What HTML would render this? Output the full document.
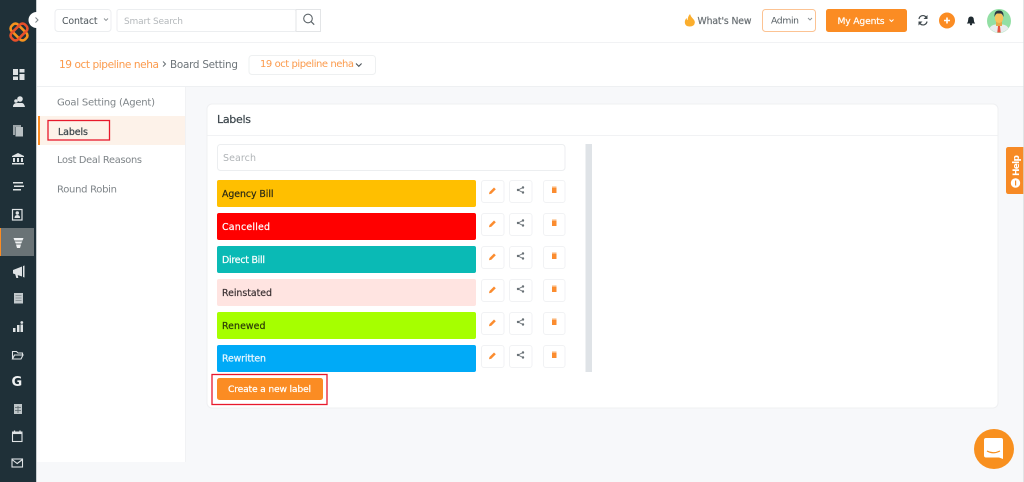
<!DOCTYPE html>
<html><head><meta charset="utf-8"><title>Labels</title>
<style>
html,body{margin:0;padding:0;width:1024px;height:482px;overflow:hidden;background:#fff}
svg{display:block;filter:blur(.3px)}
text{font-family:"DejaVu Sans","Liberation Sans",sans-serif}
.m{stroke-width:.2px;paint-order:stroke}
</style></head><body>
<svg width="1024" height="482" viewBox="0 0 1024 482" xmlns="http://www.w3.org/2000/svg">
<rect width="1024" height="482" fill="#f7f8fa"/>
<!-- top bars -->
<rect x="36" width="988" height="42" fill="#fff"/>
<rect x="36" y="42" width="988" height="1" fill="#f1f2f4"/>
<rect x="36" y="43" width="988" height="43" fill="#fff"/>
<rect x="36" y="86" width="988" height="1" fill="#eef0f2"/>
<!-- left nav -->
<rect x="37" y="87" width="148" height="375" fill="#fff"/>
<rect x="185" y="87" width="1" height="375" fill="#f1f2f4"/>
<rect x="38" y="116" width="147" height="29" fill="#fdf2e9"/>
<rect x="38" y="116" width="2" height="29" fill="#fb8c23"/>
<rect x="48" y="120.500" width="61.500" height="19.500" fill="none" stroke="#e8192c" stroke-width="1.300"/>
<text x="57" y="105.500" textLength="98" fill="#7e8488" font-size="10">Goal Setting (Agent)</text>
<text x="58" y="135" textLength="30" fill="#3a4349" font-size="9.500" class="m" stroke="#3a4349">Labels</text>
<text x="57" y="163" textLength="85" fill="#7e8488" font-size="9.800">Lost Deal Reasons</text>
<text x="57" y="192.500" textLength="60" fill="#7e8488" font-size="10">Round Robin</text>
<!-- sidebar -->
<rect width="36" height="482" fill="#1f3038"/>
<rect x="36" width="1" height="482" fill="#c9ced1"/>
<rect y="228" width="34" height="28" fill="#6a7376"/>
<rect y="228" width="1" height="28" fill="#fb8c23"/>
<!-- logo -->
<g fill="none" stroke-width="2.600">
<rect x="9.500" y="27.500" width="19" height="9" rx="3.500" stroke="#f7931e" transform="rotate(45 19 32)"/>
<rect x="9.500" y="27.500" width="19" height="9" rx="3.500" stroke="#e8502a" transform="rotate(-45 19 32)"/>
</g>
<!-- collapse -->
<circle cx="36.500" cy="20" r="8" fill="#fff"/>
<path d="M35.500 17.500 L38 20 L35.500 22.500" fill="none" stroke="#7a8286" stroke-width="1"/>
<!-- sidebar icons -->
<g fill="#dfe3e5">
<path d="M13 69h5v6h-5zM19.500 69h5v3.500h-5zM19.500 74h5v6h-5zM13 76.500h5v3.500h-5z"/>
<circle cx="20" cy="99" r="2.800"/><circle cx="16" cy="101" r="1.800"/>
<path d="M13 107q0-4 4-4h5q2 0 3 4z"/>
<path d="M13 125h8v2h-6v8h-2z" fill="#9aa3a7"/><rect x="15.500" y="127" width="7.500" height="9.500" fill="#b8c0c3"/>
<path d="M18 153l6 3v1h-12v-1zM13 158h2v4h-2zM17 158h2v4h-2zM21 158h2v4h-2zM12 163h12v1.500h-12z"/>
<path d="M13 182h10v1.500h-10zM14 185.500h10v1.500h-10zM13 189h8v1.500h-8z"/>
<rect x="12.500" y="209.500" width="9.500" height="10.500" fill="none" stroke="#dfe3e5" stroke-width="1.200"/>
<circle cx="17.300" cy="213" r="1.700"/><path d="M14.500 218q0-3 2.800-3t2.800 3z"/>
<path d="M13.500 238h10l-1 2.500h-8zM14.800 241.500h7.400l-1 2h-5.400zM16 244.500h5l-1 3.500h-3z" fill="#f1f3f4"/>
<path d="M13 270l9-3.500v10l-9-3zM23 266l1.500-.5v12l-1.500-.5zM15 273.500l2.500.8.800 3.700h-2z"/>
<rect x="14" y="293" width="9" height="10.500" fill="#c2c9cc"/><path d="M15.500 295.500h6M15.500 298h6M15.500 300.500h6" stroke="#7d878b" stroke-width=".7"/>
<path d="M13 328h2.500v4h-2.500zM17 325h2.500v7h-2.500zM20.500 324.500h2.500v7.500h-2.500z"/><circle cx="21.800" cy="322.500" r="1.400"/>
<text x="11.500" y="386" font-size="13" font-weight="700" fill="#f0f2f3">G</text>
<rect x="14" y="404" width="8" height="10" fill="#bdc5c8"/><path d="M15 407.500h6M15 410.500h6M18 406v7" stroke="#5b676c" stroke-width=".8"/>
</g>
<g fill="none" stroke="#dfe3e5" stroke-width="1.100">
<path d="M12.500 359v-7.500h4l1.500 1.500h4.500v2M12.500 359l2-4h8.500l-2 4z"/>
<rect x="12.500" y="433.500" width="9.500" height="8"/>
<path d="M12 432.500h10.500" stroke-width="2"/><path d="M14.500 430.500v2M20 430.500v2" stroke-width="1.300"/>
<rect x="12" y="459" width="10.500" height="8"/><path d="M12 459.500l5.200 4 5.300-4"/>
</g>
<!-- top left controls -->
<rect x="55" y="9.500" width="56" height="22" rx="3" fill="#fff" stroke="#eceef0"/>
<text x="62" y="24" textLength="35.500" font-size="9.400" fill="#4e565b">Contact</text>
<path d="M104 18.500l2 2 2-2" fill="none" stroke="#8a9094" stroke-width=".9"/>
<rect x="117" y="9.500" width="179" height="22" rx="2" fill="#fff" stroke="#eceef0"/>
<text x="124" y="24" textLength="59" font-size="9" fill="#b4b8bb">Smart Search</text>
<rect x="296" y="9.500" width="24.500" height="22" fill="#fff" stroke="#e3e5e7"/>
<circle cx="308" cy="18.500" r="4.300" fill="none" stroke="#5d656a" stroke-width="1.100"/>
<path d="M311.200 21.700l3 3" stroke="#5d656a" stroke-width="1.200"/>
<!-- breadcrumbs -->
<text x="59" y="68" textLength="100" font-size="10.600" fill="#fb9a4c">19 oct pipeline neha</text>
<path d="M163 61.500l2.500 2.500-2.500 2.500" fill="none" stroke="#666e73" stroke-width="1"/>
<text x="170" y="68" textLength="68" font-size="10.400" fill="#6d7479">Board Setting</text>
<rect x="249" y="55.500" width="126.500" height="19" rx="3" fill="#fff" stroke="#eef0f1"/>
<text x="260" y="67" textLength="94" font-size="10" fill="#fb9a4c">19 oct pipeline neha</text>
<path d="M356 63.500l2.800 2.800 2.800-2.800" fill="none" stroke="#4e565b" stroke-width="1.100"/>
<!-- right header -->
<path d="M690 14q.8 2.700 3 4.800 2 2 1.800 4-.5 3.700-5 3.700-5 0-5-4.200 0-2.500 1.800-4.300 0 1.500 1 2.200.2-3.700 2.400-6.200z" fill="#fbae2d"/>
<text x="697.500" y="24" textLength="54" font-size="9.300" fill="#6a7074" class="m" stroke="#6a7074">What's New</text>
<rect x="762.500" y="9.500" width="53" height="22" rx="3" fill="#fff" stroke="#fcc393"/>
<text x="771" y="23.500" textLength="28" font-size="9.200" fill="#555d62">Admin</text>
<path d="M808 18l2 2 2-2" fill="none" stroke="#8a9094" stroke-width=".9"/>
<rect x="826" y="9" width="81" height="23" rx="2.500" fill="#fb8c23"/>
<text x="837.500" y="24" textLength="47" font-size="9.200" fill="#fff" class="m" stroke="#fff">My Agents</text>
<path d="M889.500 19.500l2 2 2-2" fill="none" stroke="#fff" stroke-width="1"/>
<g fill="none" stroke="#3f484d" stroke-width="1.200">
<path d="M919 19a4 4 0 0 1 6.500-2.500l1.500 1.500M927 21.500a4 4 0 0 1-6.500 2.500l-1.500-1.500"/>
</g>
<path d="M927.500 15v4h-4zM918.500 25.500v-4h4z" fill="#3f484d"/>
<circle cx="947" cy="20.500" r="8" fill="#fb8c23"/>
<path d="M947 17.500v6M944 20.500h6" stroke="#fff" stroke-width="1.600"/>
<path d="M971 16.500q2.800 0 2.800 3.300 0 2.300 1.400 3.700h-8.400q1.400-1.400 1.400-3.700 0-3.300 2.800-3.300z" fill="#1f2a30"/><circle cx="971" cy="24.300" r="1.100" fill="#1f2a30"/>
<!-- avatar -->
<circle cx="999" cy="21" r="12" fill="#92dfa4"/>
<path d="M989.500 28q2-3 6-3.500h7q4 .5 6 3.500a12 12 0 0 1-19 0z" fill="#e9ecef"/>
<rect x="996" y="21" width="6" height="5" fill="#e5a94b"/>
<ellipse cx="999" cy="18" rx="4.200" ry="5" fill="#f8c25c"/>
<path d="M994.500 17q-.5-6.500 4.500-6.500t4.500 6.500q-1-3-2.500-3.500h-4q-1.500.5-2.500 3.500z" fill="#2b3540"/>
<path d="M998 26h2l.7 6.500h-3.400z" fill="#e8503e"/>
<!-- card -->
<rect x="207" y="104" width="791" height="304" rx="5" fill="#fff" stroke="#eff0f2"/>
<rect x="207.500" y="135" width="790" height="1" fill="#f1f2f4"/>
<text x="217" y="123" textLength="34" font-size="11" fill="#3a444a" class="m" stroke="#3a444a">Labels</text>
<rect x="217.500" y="144.500" width="347.500" height="26" rx="3" fill="#fff" stroke="#eceef0"/>
<text x="223" y="161" textLength="33" font-size="9.500" fill="#b0b4b7">Search</text>
<rect x="585.500" y="144" width="6.500" height="228" fill="#dfe3e7"/>
<!-- label bars -->
<rect x="217" y="180" width="259" height="27" rx="2" fill="#ffbf00"/>
<rect x="217" y="213" width="259" height="27" rx="2" fill="#ff0000"/>
<rect x="217" y="246" width="259" height="27" rx="2" fill="#0abab5"/>
<rect x="217" y="279" width="259" height="27" rx="2" fill="#ffe4e1"/>
<rect x="217" y="312" width="259" height="27" rx="2" fill="#a6ff00"/>
<rect x="217" y="345" width="259" height="27" rx="2" fill="#00aaf7"/>
<g>
<text x="222" y="197" textLength="51.500" fill="#2b2a15" font-size="9.400" class="m" stroke="#2b2a15">Agency Bill</text>
<text x="222" y="230" textLength="48" fill="#fff" font-size="9.400" class="m" stroke="#fff">Cancelled</text>
<text x="222" y="263" textLength="43" fill="#fff" font-size="9.400" class="m" stroke="#fff">Direct Bill</text>
<text x="222" y="296" textLength="50" fill="#3c3234" font-size="9.400" class="m" stroke="#3c3234">Reinstated</text>
<text x="222" y="329" textLength="43.500" fill="#2e3d08" font-size="9.400" class="m" stroke="#2e3d08">Renewed</text>
<text x="222" y="361.500" textLength="44" fill="#eaf7ff" font-size="9.400" class="m" stroke="#eaf7ff">Rewritten</text>
</g>
<defs>
<g id="act">
<rect x="481.500" y="0.500" width="22.500" height="22" rx="2.500" fill="#fff" stroke="#f1f2f4"/>
<rect x="509.500" y="0.500" width="22.500" height="22" rx="2.500" fill="#fff" stroke="#f1f2f4"/>
<rect x="543.500" y="0.500" width="21.500" height="22" rx="2.500" fill="#fff" stroke="#f1f2f4"/>
<path d="M489.500 12l4.500-4.500 1.800 1.800-4.500 4.500-2.300.5z" fill="#fb8c2f"/>
<circle cx="518" cy="10" r="1.200" fill="#687075"/><circle cx="523" cy="7.500" r="1.200" fill="#687075"/><circle cx="523" cy="12.500" r="1.200" fill="#687075"/>
<path d="M518 10l5-2.500M518 10l5 2.500" stroke="#687075" stroke-width=".8"/>
<rect x="552" y="7.500" width="4.500" height="5.500" fill="#fb8c2f"/><rect x="552" y="6.500" width="4.500" height=".7" fill="#fbb06e"/>
</g>
</defs>
<use href="#act" y="180"/><use href="#act" y="213"/><use href="#act" y="246"/><use href="#act" y="279"/><use href="#act" y="312"/><use href="#act" y="345"/>
<!-- create button -->
<rect x="212" y="374.500" width="115" height="30" fill="none" stroke="#e8192c" stroke-width="1.300"/>
<rect x="217" y="378" width="106" height="22" rx="2.500" fill="#fb8c23"/>
<text x="228" y="392" textLength="83" font-size="9.200" fill="#fff" class="m" stroke="#fff">Create a new label</text>
<!-- help -->
<path d="M1024 147h-15.500q-2.500 0-2.500 2.500v42q0 2.500 2.500 2.500h15.500z" fill="#f78a25"/>
<text transform="translate(1019,176) rotate(-90)" textLength="21" font-size="9" font-weight="700" fill="#fff">Help</text>
<circle cx="1015.500" cy="183" r="4.700" fill="#fff"/>
<rect x="1015" y="180.500" width="1.200" height="5" fill="#f78a25"/>
<!-- chat -->
<circle cx="994" cy="449" r="20" fill="#f8901f"/>
<path d="M986 438h15q2 0 2 2v19l-4-1.500h-13q-2 0-2-2v-15.500q0-2 2-2z" fill="#fff"/>
<path d="M987 451q6 3.500 13 0" fill="none" stroke="#f8901f" stroke-width="1.200"/>
<rect x="1023" y="0" width="1" height="482" fill="#d8dbdd" opacity=".7"/>
</svg>
</body></html>
